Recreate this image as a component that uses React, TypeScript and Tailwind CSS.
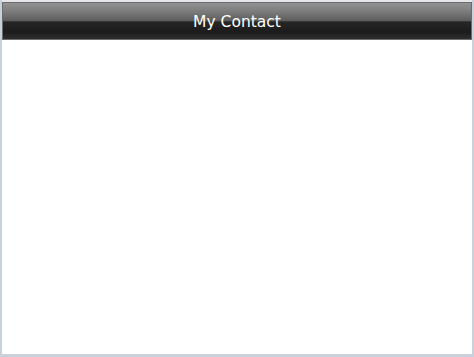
export default function App() {
  return (
    <div className="w-[474px] h-[357px] bg-[#c9d1db] pl-[2px] pr-[2px] pb-[3px] pt-0 flex flex-col">
      <div className="flex-1 flex flex-col bg-white">
        <div className="h-[2px] bg-[#e4e6e9]" />
        <header className="h-[38px] flex items-center justify-center border border-[#6b6b6b] bg-[linear-gradient(to_bottom,#929292_0%,#7a7a7a_25%,#5c5c5c_50%,#262626_52%,#1c1c1c_80%,#2e2e2e_100%)]">
          <h1 className="text-white text-[15.5px] font-['DejaVu_Sans',Verdana,sans-serif] leading-none pt-[3px]">
            My Contact
          </h1>
        </header>
        <main className="flex-1 bg-white" />
      </div>
    </div>
  );
}
